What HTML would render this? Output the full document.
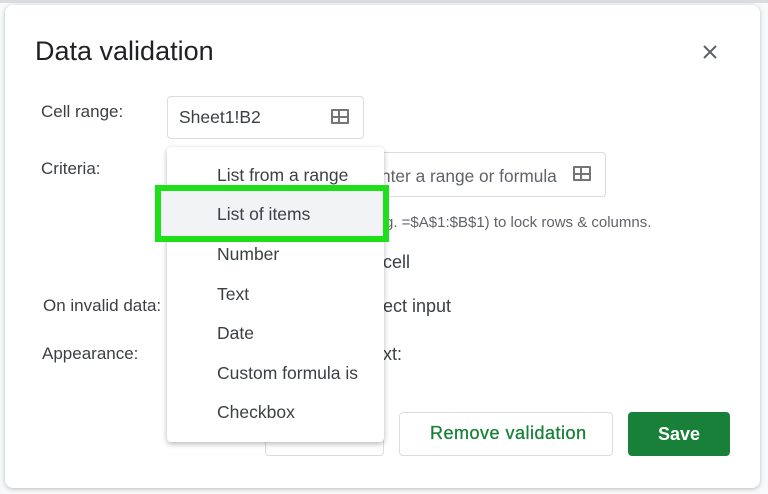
<!DOCTYPE html>
<html><head><style>
*{margin:0;padding:0;box-sizing:border-box}
body{width:768px;height:494px;overflow:hidden;background:#f8f9fa;font-family:"Liberation Sans",sans-serif;position:relative;color:#3c4043}
.a{position:absolute;white-space:nowrap}
.dlg{position:absolute;left:5px;top:5px;width:755px;height:483px;background:#fff;border-radius:8px;box-shadow:0 1px 4px rgba(0,0,0,.25)}
.lbl{font-size:17px;color:#3c4043}
.box{position:absolute;border:1px solid #dadce0;border-radius:4px;background:#fff}
.grid{position:absolute;width:18px;height:15px;border:2px solid #757575;border-radius:1px}
.grid:before{content:"";position:absolute;left:5px;top:-2px;width:2px;height:15px;background:#757575}
.grid:after{content:"";position:absolute;left:-2px;top:4.5px;width:18px;height:2px;background:#757575}
.item{position:absolute;left:50px;font-size:17.5px;color:#3c4043}
</style></head><body>
<div class="a" style="left:0;top:0;width:768px;height:3px;background:#dadce0"></div>
<div class="dlg"></div>
<div class="a" style="left:35px;top:36px;font-size:27px;color:#202124">Data validation</div>
<svg class="a" style="left:702px;top:44px" width="16" height="16"><path d="M2 2L14 14M14 2L2 14" stroke="#5f6368" stroke-width="2"/></svg>
<div class="a lbl" style="left:41px;top:102px">Cell range:</div>
<div class="box" style="left:167px;top:96px;width:197px;height:43px"></div>
<div class="a" style="left:179px;top:107px;font-size:17.5px;color:#3c4043">Sheet1!B2</div>
<div class="grid" style="left:331px;top:109px"></div>
<div class="a lbl" style="left:41px;top:159px">Criteria:</div>
<div class="box" style="left:360px;top:152px;width:246px;height:45px"></div>
<div class="a" style="left:381px;top:166px;font-size:17.3px;color:#5f6368">nter a range or formula</div>
<div class="grid" style="left:573px;top:166px"></div>
<div class="a" style="left:385px;top:214px;font-size:15px;color:#5f6368">g. =$A$1:$B$1) to lock rows &amp; columns.</div>
<div class="a" style="left:167px;top:252px;width:2px;height:18px;background:#5f6368"></div>
<div class="a" style="left:383px;top:252px;font-size:18px">cell</div>
<div class="a lbl" style="left:43px;top:296px">On invalid data:</div>
<div class="a" style="left:383px;top:296px;font-size:18px">ect input</div>
<div class="a lbl" style="left:42px;top:344px">Appearance:</div>
<div class="a" style="left:167px;top:345px;width:2px;height:18px;background:#5f6368"></div>
<div class="a" style="left:383px;top:344px;font-size:18px">xt:</div>
<div class="box" style="left:265px;top:412px;width:119px;height:44px"></div>
<div class="box" style="left:399px;top:412px;width:214px;height:44px"></div>
<div class="a" style="left:430px;top:423px;font-size:18px;color:#188038;letter-spacing:0.5px;-webkit-text-stroke:0.3px #188038">Remove validation</div>
<div class="a" style="left:628px;top:412px;width:102px;height:44px;background:#188038;border-radius:4px;color:#fff;font-size:18px;font-weight:bold;text-align:center;line-height:44px">Save</div>
<div class="a" style="left:167px;top:147px;width:217px;height:295px;background:#fff;border-radius:4px;box-shadow:0 2px 6px rgba(0,0,0,.28)">
<div class="item" style="top:18px">List from a range</div>
<div class="item" style="top:97px">Number</div>
<div class="item" style="top:137px">Text</div>
<div class="item" style="top:176px">Date</div>
<div class="item" style="top:216px">Custom formula is</div>
<div class="item" style="top:255px">Checkbox</div>
</div>
<div class="a" style="left:155px;top:185px;width:234px;height:57px;border:6px solid #1ee01a;background:#f1f3f4"></div>
<div class="a" style="left:217px;top:204px;font-size:17.5px;color:#3c4043">List of items</div>
</body></html>
